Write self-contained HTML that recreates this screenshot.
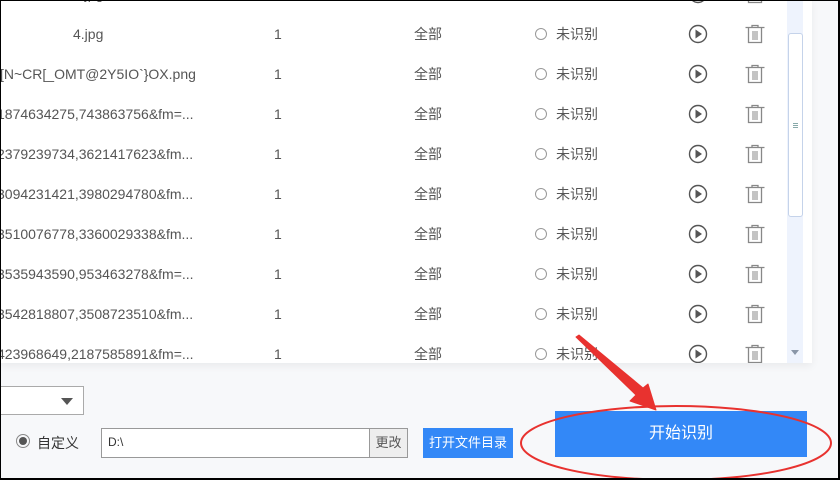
<!DOCTYPE html>
<html><head><meta charset="utf-8"><style>
*{margin:0;padding:0;box-sizing:border-box}
body{width:840px;height:480px;overflow:hidden;background:#f7f8fa;font-family:"Liberation Sans","Noto Sans CJK SC",sans-serif;position:relative;font-size:14px;color:#555}
.frame{position:absolute;left:0;top:0;width:840px;height:480px;border:1px solid #000;border-right-width:2px;border-bottom-width:2px;pointer-events:none;z-index:10}
.panel{position:absolute;left:0;top:0;width:812px;height:363px;background:#fff;box-shadow:0 3px 8px rgba(0,0,0,.06);overflow:hidden}
.row{position:absolute;left:0;width:787px;height:40px}
.row span{position:absolute;top:0;line-height:40px;white-space:nowrap}
.track{position:absolute;left:787px;top:0;width:16px;height:363px;background:#eef3fd}
.thumb{position:absolute;left:788px;top:33px;width:15px;height:184px;background:#fff;border:1px solid #c5d3ea;border-radius:3px}
.radio{position:absolute;width:12px;height:12px;border:1px solid #999;border-radius:50%}
</style></head><body>
<div class="panel">
<div id="rows"></div>
<div class="track"></div>
<div class="thumb"><div style="position:absolute;left:4px;top:89px;width:5px;height:1px;background:#8aa;box-shadow:0 2px #8aa,0 4px #8aa"></div></div>
<div style="position:absolute;left:791px;top:350px;border:4px solid transparent;border-top:5px solid #8a96a8"></div>
</div>
<script>
var names=["4.jpg","[N~CR[_OMT@2Y5IO`}OX.png","1874634275,743863756&fm=...","2379239734,3621417623&fm...","3094231421,3980294780&fm...","3510076778,3360029338&fm...","3535943590,953463278&fm=...","3542818807,3508723510&fm...","423968649,2187585891&fm=..."];
var h="";
for(var i=-1;i<9;i++){var y=14+i*40;var n=i<0?"3.jpg":names[i];
var x=i<=0?73:(i==1?0:-3);
h+='<div class="row" style="top:'+y+'px"><span style="left:'+x+'px">'+n+'</span><span style="left:274px">1</span><span style="left:414px">全部</span><div class="radio" style="left:535px;top:14px"></div><span style="left:556px">未识别</span>'+
'<svg style="position:absolute;left:688px;top:10px" width="20" height="20"><circle cx="10" cy="10" r="8.5" fill="none" stroke="#555" stroke-width="1.4"/><path d="M7.5 5.5L14 10L7.5 14.5Z" fill="#555"/></svg>'+
'<svg style="position:absolute;left:744px;top:9px" width="22" height="22"><path d="M1.5 4.5H20.5M8 4.5V2.5H14V4.5M4.5 4.5V19.5H17.5V4.5" fill="none" stroke="#888" stroke-width="1.3"/><path d="M9 8V17M11 8V17M13 8V17" stroke="#888" stroke-width="1"/></svg></div>';}
document.getElementById("rows").innerHTML=h;
</script>
<div style="position:absolute;left:-2px;top:386px;width:86px;height:29px;background:#fff;border:1px solid #aaa"></div>
<div style="position:absolute;left:61px;top:398px;border:6px solid transparent;border-top:7px solid #555;border-bottom:0"></div>
<div class="radio" style="left:16px;top:434px;width:14px;height:14px;border-color:#888"><div style="position:absolute;left:2px;top:2px;width:8px;height:8px;border-radius:50%;background:#555"></div></div>
<span style="position:absolute;left:37px;top:433px;font-size:14px;color:#333">自定义</span>
<div style="position:absolute;left:101px;top:428px;width:307px;height:30px;background:#fff;border:1px solid #999;font-size:12px;color:#333;line-height:27px;padding-left:6px">D:\</div>
<div style="position:absolute;left:369px;top:428px;width:39px;height:30px;background:#eee;border:1px solid #999;font-size:13px;color:#555;line-height:28px;text-align:center">更改</div>
<div style="position:absolute;left:423px;top:428px;width:90px;height:30px;background:#3388f7;color:#fff;font-size:13px;line-height:30px;text-align:center">打开文件目录</div>
<div style="position:absolute;left:555px;top:411px;width:252px;height:46px;background:#3388f7;color:#fff;font-size:16px;line-height:46px;text-align:center">开始识别</div>
<svg style="position:absolute;left:0;top:0;z-index:5" width="840" height="480"><ellipse cx="676" cy="443" rx="155" ry="37" fill="none" stroke="#e8322f" stroke-width="2"/><path d="M576 337L579 335L643 388L648 384L656 410L630 401L636 395Z" fill="#e8322f" stroke="#e8322f" stroke-width="1" stroke-linejoin="round"/></svg>
<div class="frame"></div>
</body></html>
